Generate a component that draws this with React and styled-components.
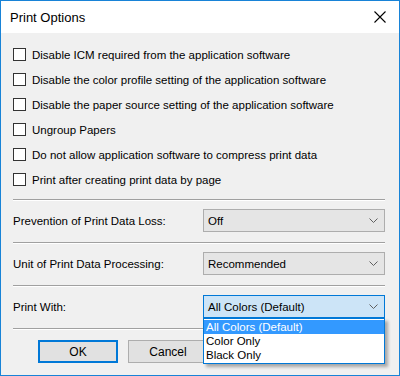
import React from "react";
import styled, { createGlobalStyle } from "styled-components";

const GlobalStyle = createGlobalStyle`
  html, body {
    margin: 0;
    padding: 0;
    background: #ffffff;
  }
  * {
    box-sizing: border-box;
  }
`;

const Window = styled.div`
  position: relative;
  width: 400px;
  height: 376px;
  border: 1px solid #1883d7;
  background: #f0f0f0;
  font-family: "Liberation Sans", Arial, sans-serif;
  font-size: 11.5px;
  color: #000;
  overflow: hidden;
`;

const TitleBar = styled.div`
  height: 32px;
  background: #ffffff;
  display: flex;
  align-items: center;
  justify-content: space-between;
  padding: 0 9px 0 9px;
`;

const Title = styled.span`
  font-size: 13px;
  padding-top: 1px;
`;

const CloseButton = styled.div`
  width: 16px;
  height: 16px;
  display: flex;
  align-items: center;
  justify-content: center;
  margin-right: 2px;
`;

const Body = styled.div`
  padding: 9px 14px 0 12px;
  display: flex;
  flex-direction: column;
`;

const CheckRow = styled.label`
  height: 25px;
  display: flex;
  align-items: center;
  gap: 6px;
  white-space: nowrap;
`;

const CheckBox = styled.span`
  width: 13px;
  height: 13px;
  border: 1px solid #333333;
  background: #ffffff;
  flex: none;
`;

const Separator = styled.div`
  height: 2px;
  border-top: 1px solid #a0a0a0;
  border-bottom: 1px solid #ffffff;
  margin: ${(p) => p.$top || 7}px 0 8px 0;
`;

const FieldRow = styled.div`
  position: relative;
  height: 23px;
  display: flex;
  align-items: center;
  justify-content: space-between;
`;

const FieldLabel = styled.span`
  white-space: nowrap;
`;

const Select = styled.div`
  width: 182px;
  height: 23px;
  display: flex;
  align-items: center;
  justify-content: space-between;
  padding: 0 6px 0 4px;
  border: 1px solid ${(p) => (p.$focused ? "#0078d7" : "#adadad")};
  background: ${(p) => (p.$focused ? "#cce4f7" : "#e5e5e5")};
`;

const DropList = styled.div`
  position: absolute;
  top: 23px;
  right: 0;
  width: 182px;
  background: #ffffff;
  border: 1px solid #0078d7;
  box-shadow: 3px 3px 3px rgba(0, 0, 0, 0.3);
  padding: 1px 0;
  z-index: 5;
`;

const DropItem = styled.div`
  height: 14px;
  line-height: 14px;
  padding-left: 2px;
  background: ${(p) => (p.$selected ? "#3399ff" : "transparent")};
  color: ${(p) => (p.$selected ? "#ffffff" : "#000000")};
`;

const Buttons = styled.div`
  display: flex;
  gap: 10px;
  padding-left: 25px;
  margin-top: 2px;
`;

const Button = styled.div`
  width: 80px;
  height: 23px;
  display: flex;
  align-items: center;
  justify-content: center;
  font-size: 12px;
  background: #e1e1e1;
  border: ${(p) => (p.$default ? "2px solid #0078d7" : "1px solid #adadad")};
`;

const Chevron = () => (
  <svg width="9" height="5" viewBox="0 0 9 5">
    <path d="M0.5 0.5 L4.5 4.5 L8.5 0.5" fill="none" stroke="#606060" strokeWidth="1" />
  </svg>
);

const CloseIcon = () => (
  <svg width="12" height="12" viewBox="0 0 12 12">
    <path d="M0.5 0.5 L11.5 11.5 M11.5 0.5 L0.5 11.5" stroke="#000" strokeWidth="1.1" />
  </svg>
);

const checks = [
  "Disable ICM required from the application software",
  "Disable the color profile setting of the application software",
  "Disable the paper source setting of the application software",
  "Ungroup Papers",
  "Do not allow application software to compress print data",
  "Print after creating print data by page",
];

const printWith = ["All Colors (Default)", "Color Only", "Black Only"];

export default function App() {
  return (
    <>
      <GlobalStyle />
      <Window>
        <TitleBar>
          <Title>Print Options</Title>
          <CloseButton>
            <CloseIcon />
          </CloseButton>
        </TitleBar>
        <Body>
          {checks.map((c) => (
            <CheckRow key={c}>
              <CheckBox />
              <span>{c}</span>
            </CheckRow>
          ))}
          <Separator />
          <FieldRow>
            <FieldLabel>Prevention of Print Data Loss:</FieldLabel>
            <Select>
              <span>Off</span>
              <Chevron />
            </Select>
          </FieldRow>
          <Separator $top={10} />
          <FieldRow>
            <FieldLabel>Unit of Print Data Processing:</FieldLabel>
            <Select>
              <span>Recommended</span>
              <Chevron />
            </Select>
          </FieldRow>
          <Separator $top={10} />
          <FieldRow>
            <FieldLabel>Print With:</FieldLabel>
            <Select $focused>
              <span>All Colors (Default)</span>
              <Chevron />
            </Select>
            <DropList>
              {printWith.map((o, i) => (
                <DropItem key={o} $selected={i === 0}>
                  {o}
                </DropItem>
              ))}
            </DropList>
          </FieldRow>
          <Separator $top={10} />
          <Buttons>
            <Button $default>OK</Button>
            <Button>Cancel</Button>
          </Buttons>
        </Body>
      </Window>
    </>
  );
}
